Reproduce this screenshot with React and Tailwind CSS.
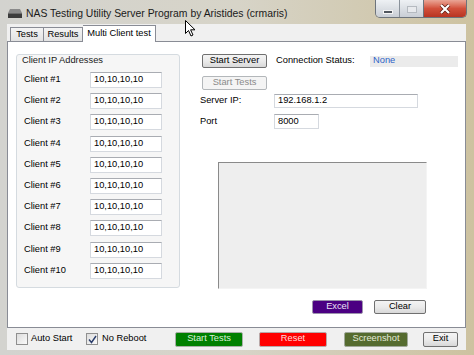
const btn =
  "flex items-center justify-center border border-[#707070] rounded-[2px] bg-gradient-to-b from-[#f4f4f4] via-[#ebebeb] to-[#d8d8d8] text-black";
const inp =
  "flex items-center pl-[3px] bg-white border border-[#d5d9df] border-t-[#a9acb2] text-black";

function Checkbox({ checked }) {
  return (
    <div className="w-[12px] h-[12px] border border-[#8f8f8f] bg-gradient-to-br from-[#dcdcdc] to-[#fafafa] flex items-center justify-center">
      {checked && (
        <svg width="9" height="9" viewBox="0 0 9 9">
          <path d="M1 4.5 L3.5 7.5 L8 1" fill="none" stroke="#2a3d6b" strokeWidth="1.4" />
        </svg>
      )}
    </div>
  );
}

export default function App() {
  const clients = [1, 2, 3, 4, 5, 6, 7, 8, 9, 10];
  return (
    <div className="relative w-[474px] h-[355px] overflow-hidden bg-gradient-to-r from-[#d3d3cf] via-[#d7d4c8] to-[#cdc2a0] font-['Liberation_Sans',Arial,sans-serif] text-[9.3px] text-black">
      {/* Title bar */}
      <div className="flex h-[24px]">
        <div className="pl-[8px] pt-[9px]">
          <svg width="14" height="9" viewBox="0 0 14 9">
            <path d="M2 0 H12 L14 4 H0 Z" fill="#8a8a8a" />
            <rect x="0" y="4" width="14" height="5" fill="#3c3c3c" />
            <rect x="0" y="4" width="14" height="1" fill="#6a6a6a" />
          </svg>
        </div>
        <div className="ml-[4px] pt-[7px] text-[10.4px] leading-[13px] text-[#1a1a1a]">
          NAS Testing Utility Server Program by Aristides (crmaris)
        </div>
        <div className="ml-auto mr-[7px] flex h-[18px] rounded-b-[5px] border border-t-0 border-[#6d747c] overflow-hidden">
          <div className="w-[24px] flex justify-center bg-gradient-to-b from-[#eef1f4] to-[#c9ced5] border-r border-[#8a929b]">
            <div className="mt-[10px] w-[10px] h-[4px] bg-[#50565e] border border-[#f4f4f4]" />
          </div>
          <div className="w-[24px] flex items-center justify-center bg-gradient-to-b from-[#eef1f4] to-[#c9ced5] border-r border-[#6d747c]">
            <div className="mt-[1px] w-[10px] h-[7px] border border-[#b5bac0] bg-[#e8eaed]" />
          </div>
          <div className="w-[42px] flex items-center justify-center bg-gradient-to-b from-[#e9a596] via-[#d2503b] to-[#b83422]">
            <svg width="12" height="10" viewBox="0 0 12 10">
              <path d="M2 1 L10 9 M10 1 L2 9" stroke="#5a1a10" strokeWidth="3.6" />
              <path d="M2 1 L10 9 M10 1 L2 9" stroke="#ffffff" strokeWidth="2.2" />
            </svg>
          </div>
        </div>
      </div>

      {/* Client area */}
      <div className="ml-[7px] w-[459px] h-[326px] bg-[#f0f0f0] flex flex-col">
        {/* Tab strip */}
        <div className="h-[17px] flex items-end pl-[3px]">
          <div className="w-[34px] h-[14px] flex items-center justify-center border border-b-0 border-[#898c95] bg-gradient-to-b from-[#f4f4f4] to-[#e2e2e2]">
            Tests
          </div>
          <div className="w-[39px] h-[14px] flex items-center justify-center border border-l-0 border-b-0 border-[#898c95] bg-gradient-to-b from-[#f4f4f4] to-[#e2e2e2]">
            Results
          </div>
          <div className="relative z-10 -mb-[1px] w-[73px] h-[17px] flex items-center justify-center border border-l-0 border-b-0 border-[#898c95] bg-white">
            Multi Client test
          </div>
        </div>

        {/* Tab panel */}
        <div className="h-[287px] border border-[#898c95] bg-white flex pl-[8px] pt-[12px]">
          {/* Group box */}
          <div className="w-[164px] h-[234px] border border-[#d5dbe0] rounded-[3px] bg-[#f6f6f6] flex flex-col">
            <div className="h-[12px] pl-[5px] leading-[10px] text-[#1a1a1a]">Client IP Addresses</div>
            <div className="mt-[5px] flex flex-col gap-[5.2px]">
              {clients.map((n) => (
                <div key={n} className="h-[16px] flex items-center">
                  <div className="w-[73px] pl-[7px]">Client #{n}</div>
                  <div className={inp + " w-[72px] h-[16px]"}>10,10,10,10</div>
                </div>
              ))}
            </div>
          </div>

          {/* Right column */}
          <div className="ml-[20px] flex flex-col">
            <div className="h-[14px] flex items-center">
              <div className={btn + " ml-[2px] w-[65px] h-[14px]"}>Start Server</div>
              <div className="ml-[9px] w-[94px]">Connection Status:</div>
              <div className="w-[88px] h-[11px] bg-[#ebebeb] pl-[3px] flex items-center text-[#2d63c8]">None</div>
            </div>
            <div className="mt-[8px] h-[14px] flex items-center">
              <div className="ml-[2px] w-[65px] h-[14px] flex items-center justify-center border border-[#b3b7ba] rounded-[2px] bg-[#f4f4f4] text-[#8a8a8a]">
                Start Tests
              </div>
            </div>
            <div className="mt-[4px] h-[14px] flex items-center">
              <div className="w-[74px]">Server IP:</div>
              <div className={inp + " w-[144px] h-[14px]"}>192.168.1.2</div>
            </div>
            <div className="mt-[6px] h-[15px] flex items-center">
              <div className="w-[74px]">Port</div>
              <div className={inp + " w-[45px] h-[15px]"}>8000</div>
            </div>
            <div className="mt-[33px] ml-[18px] w-[209px] h-[127px] bg-[#eeeeee] border border-t-[#8a8a8a] border-l-[#8a8a8a] border-r-[#f4f4f4] border-b-[#f4f4f4]" />
            <div className="mt-[11px] flex">
              <div className="ml-[112px] w-[51px] h-[14px] flex items-center justify-center border border-[#9c94ac] rounded-[2px] bg-[#4b0082] text-[#ece0f6]">
                Excel
              </div>
              <div className={btn + " ml-[11px] w-[52px] h-[14px]"}>Clear</div>
            </div>
          </div>
        </div>

        {/* Bottom bar */}
        <div className="h-[22px] flex items-center">
          <div className="ml-[9px]">
            <Checkbox />
          </div>
          <div className="ml-[3px] w-[55px]">Auto Start</div>
          <Checkbox checked />
          <div className="ml-[4px] w-[73px]">No Reboot</div>
          <div className="w-[68px] h-[15px] flex items-center justify-center border border-[#a8b0a8] rounded-[2px] bg-[#008000] text-[#d8f2d8]">
            Start Tests
          </div>
          <div className="ml-[16px] w-[68px] h-[15px] flex items-center justify-center border border-[#b8a8a8] rounded-[2px] bg-[#ff0000] text-[#ffdede]">
            Reset
          </div>
          <div className="ml-[17px] w-[64px] h-[15px] flex items-center justify-center border border-[#a0a89a] rounded-[2px] bg-[#556b2f] text-[#e4ead8]">
            Screenshot
          </div>
          <div className={btn + " ml-[15px] w-[35px] h-[15px]"}>Exit</div>
        </div>
      </div>

      {/* Mouse cursor */}
      <svg className="absolute left-[185px] top-[20px]" width="11" height="17" viewBox="0 0 11 17">
        <path d="M0.5 0.5 L0.5 13.5 L3.5 10.5 L6 16 L8 15 L5.6 9.8 L10 9.8 Z" fill="#ffffff" stroke="#000000" strokeWidth="1" strokeLinejoin="round" />
      </svg>
    </div>
  );
}
